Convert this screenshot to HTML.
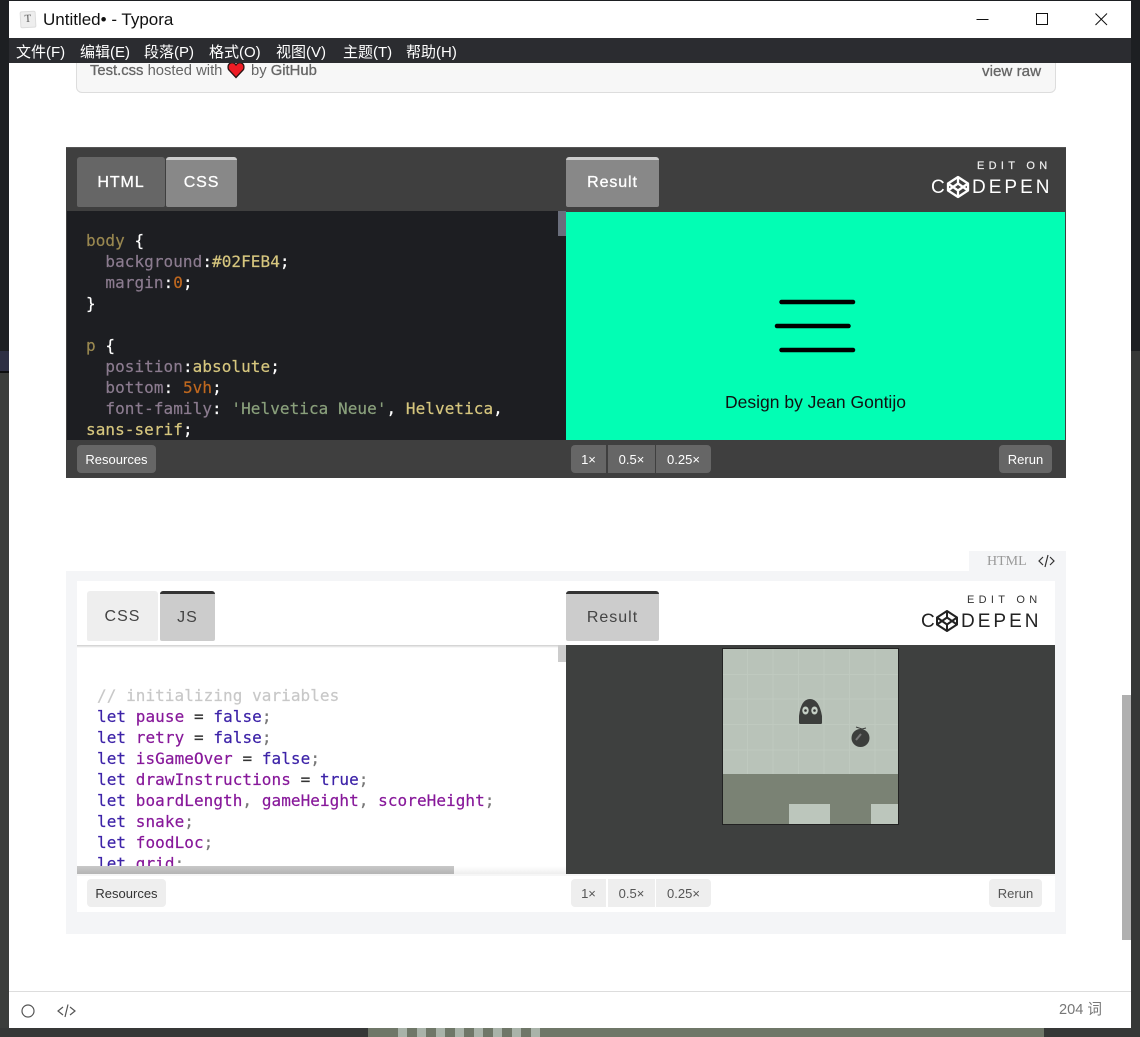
<!DOCTYPE html>
<html><head><meta charset="utf-8"><style>
html,body{margin:0;padding:0;width:1140px;height:1037px;overflow:hidden;background:#1d1f22;font-family:"Liberation Sans","Noto Sans CJK SC",sans-serif}
div,span.a,svg{position:absolute}
.t{white-space:pre;line-height:1}
.tab{display:flex;align-items:center;justify-content:center;box-sizing:border-box;font-size:16px;letter-spacing:1px;border-radius:3px 3px 2px 2px}
.d{-webkit-text-stroke:.3px #fff;letter-spacing:.9px}
.btn{display:flex;align-items:center;justify-content:center;box-sizing:border-box;font-size:13px;border-radius:4px;height:28px;top:0}
.code{font-family:"DejaVu Sans Mono","Liberation Mono",monospace;font-size:16px;letter-spacing:.06px;line-height:21px;white-space:pre;overflow:hidden;-webkit-text-stroke:.2px}
.m{font-size:15px;color:#fff;top:44px;line-height:18px;white-space:pre}
.dk .s{color:#9a8850}.dk .b{color:#fff}.dk .p{color:#8b7b8f}.dk .v{color:#d6c67e}.dk .n{color:#c0681f}.dk .q{color:#8aa07c}
.lt{color:#444}.lt .c{color:#c8c8c8}.lt .k{color:#3d23a8}.lt .i{color:#87189a}.lt .o{color:#333}.lt .u{color:#777}
</style></head><body>
<div style="left:0;top:351px;width:9px;height:20px;background:#2e3044"></div>
<div style="left:0;top:371px;width:9px;height:2px;background:#0e0f10"></div>
<div style="left:0;top:373px;width:9px;height:664px;background:#3b3d3b"></div>
<div style="left:1131px;top:0;width:9px;height:351px;background:#1d1f22"></div>
<div style="left:1131px;top:351px;width:9px;height:686px;background:#363837"></div>
<div style="left:0;top:1028px;width:1140px;height:9px;background:#363837"></div>
<div style="left:368px;top:1028px;width:676px;height:9px;background:#6f7768"></div>
<div style="left:398px;top:1028px;width:150px;height:9px;background:repeating-linear-gradient(90deg,#a9b3a9 0 9px,#6f7768 9px 19px)"></div>

<div style="left:9px;top:1px;width:1122px;height:1027px;background:#fff"></div>

<!-- gist -->
<div style="left:76px;top:55px;width:978px;height:36px;background:#f7f7f7;border:1px solid #ddd;border-radius:6px"></div>
<div class="t" style="left:90px;top:64px;font-size:14.800px;color:#666"><span style="-webkit-text-stroke:.3px #666">Test.css</span> hosted with</div>
<svg style="left:227px;top:60px" width="18" height="19" viewBox="0 0 18 19"><path d="M9 17.500 1.500 9.500Q0 5 3.500 3Q7 2 9 5Q11 2 14.500 3Q18 5 16.500 9.500Z" fill="#ee1c25" stroke="#2b1414" stroke-width="1.300"/></svg>
<div class="t" style="left:251px;top:64px;font-size:14.800px;color:#666">by <span style="-webkit-text-stroke:.3px #666">GitHub</span></div>
<div class="t" style="left:982px;top:64px;font-size:15.200px;color:#666;-webkit-text-stroke:.3px #666">view raw</div>

<!-- title bar -->
<div style="left:9px;top:38px;width:1122px;height:25px;background:#2b2c30"></div>
<div style="left:20px;top:11px;width:16px;height:17px;background:#eee;border:1px solid #ddd;border-radius:2px;box-sizing:border-box;transform:rotate(-3deg);color:#555;font:11px/15px 'Liberation Serif',serif;text-align:center">T</div>
<div class="t" style="left:43px;top:11px;font-size:17px;color:#111">Untitled• - Typora</div>
<svg style="left:970px;top:8px" width="150" height="22" viewBox="0 0 150 22" fill="none" stroke="#111" stroke-width="1"><path d="M6.500 11.500H18.500"/><rect x="66.500" y="5.500" width="11" height="11"/><path d="M125.500 5.500 137 17M137 5.500 125.500 17"/></svg>
<div class="m" style="left:16px">文件(F)</div>
<div class="m" style="left:80px">编辑(E)</div>
<div class="m" style="left:144px">段落(P)</div>
<div class="m" style="left:209px">格式(O)</div>
<div class="m" style="left:276px">视图(V)</div>
<div class="m" style="left:343px">主题(T)</div>
<div class="m" style="left:406px">帮助(H)</div>

<!-- pen 1 -->
<div style="left:66px;top:147px;width:1000px;height:331px;background:#3f3f3f;border-top:1px solid #555;box-sizing:border-box"></div>
<div class="tab d" style="left:77px;top:157px;width:88px;height:50px;background:#666;color:#fff;padding-top:1px">HTML</div>
<div class="tab d" style="left:166px;top:157px;width:71px;height:50px;background:#888;color:#fff;border-top:3px solid #ccc;padding-bottom:1px">CSS</div>
<div class="tab d" style="left:566px;top:157px;width:93px;height:50px;background:#888;color:#fff;border-top:3px solid #ccc;padding-bottom:1px">Result</div>
<div class="t" style="left:977px;top:161px;font-size:11px;letter-spacing:4.300px;color:#eee;-webkit-text-stroke:.2px #eee">EDIT ON</div>
<div class="t" style="left:931px;top:178px;font-size:19px;letter-spacing:1.600px;color:#fff">C</div>
<svg style="left:946px;top:175px" width="24" height="24" viewBox="0 0 24 24" fill="none" stroke="#fff" stroke-width="2.300" stroke-linejoin="round"><path d="M12 2 22 8.500V15.500L12 22 2 15.500V8.500ZM12 2V8M12 16V22M2 8.500 12 15.500 22 8.500M2 15.500 12 8.500 22 15.500"/></svg>
<div class="t" style="left:972px;top:178px;font-size:19px;letter-spacing:3px;color:#fff">DEPEN</div>
<div style="left:67px;top:211px;width:499px;height:229px;background:#1d1e22"></div>
<div class="code dk" style="left:86px;top:230px;width:470px;height:210px;color:#fff"><span class="s">body</span> <span class="b">{</span>
  <span class="p">background</span><span class="b">:</span><span class="v">#02FEB4</span><span class="b">;</span>
  <span class="p">margin</span><span class="b">:</span><span class="n">0</span><span class="b">;</span>
<span class="b">}</span>

<span class="s">p</span> <span class="b">{</span>
  <span class="p">position</span><span class="b">:</span><span class="v">absolute</span><span class="b">;</span>
  <span class="p">bottom</span><span class="b">:</span> <span class="n">5vh</span><span class="b">;</span>
  <span class="p">font-family</span><span class="b">:</span> <span class="q">'Helvetica Neue'</span><span class="b">,</span> <span class="v">Helvetica</span><span class="b">,</span>
<span class="v">sans-serif</span><span class="b">;</span></div>
<div style="left:558px;top:211px;width:8px;height:25px;background:#6a6e7c"></div>
<div style="left:566px;top:212px;width:499px;height:228px;background:#02FEB4"></div>
<svg style="left:770px;top:295px" width="90" height="60" viewBox="0 0 90 60" stroke="#000" stroke-width="4.500" stroke-linecap="round" fill="none"><path d="M11.500 7H83"/><path d="M7 31H78.500"/><path d="M11.500 55H83"/></svg>
<div class="t" style="left:725px;top:394px;font-size:17.500px;color:#111">Design by Jean Gontijo</div>
<div class="btn" style="left:77px;top:445px;width:79px;background:#666;color:#fff">Resources</div>
<div class="btn" style="left:571px;top:445px;width:35px;background:#666;color:#fff;border-radius:4px 0 0 4px">1×</div>
<div class="btn" style="left:608px;top:445px;width:47px;background:#666;color:#fff;border-radius:0">0.5×</div>
<div class="btn" style="left:656px;top:445px;width:55px;background:#666;color:#fff;border-radius:0 4px 4px 0">0.25×</div>
<div class="btn" style="left:999px;top:445px;width:53px;background:#666;color:#fff">Rerun</div>

<!-- pen 2 -->
<div style="left:969px;top:551px;width:97px;height:20px;background:#f4f5f7"></div>
<div class="t" style="left:987px;top:554px;font:14px 'Liberation Serif',serif;color:#999">HTML</div>
<svg style="left:1037px;top:553px" width="19" height="16" viewBox="0 0 19 16" fill="none" stroke="#333" stroke-width="1.200"><path d="M6 4 2 8l4 4M13 4l4 4-4 4M11 2 8 14"/></svg>
<div style="left:66px;top:571px;width:1000px;height:363px;background:#f4f5f7"></div>
<div style="left:77px;top:581px;width:978px;height:331px;background:#fff"></div>
<div style="left:77px;top:645px;width:489px;height:3px;background:linear-gradient(#ccc,#fff)"></div>
<div class="tab" style="left:87px;top:591px;width:71px;height:50px;background:#eee;color:#444;padding-top:1px">CSS</div>
<div class="tab" style="left:160px;top:591px;width:55px;height:50px;background:#ccc;color:#444;border-top:3px solid #333">JS</div>
<div class="tab" style="left:566px;top:591px;width:93px;height:50px;background:#ccc;color:#444;border-top:3px solid #333">Result</div>
<div class="t" style="left:967px;top:595px;font-size:11px;letter-spacing:4.300px;color:#333">EDIT ON</div>
<div class="t" style="left:921px;top:612px;font-size:19px;letter-spacing:1.600px;color:#222">C</div>
<svg style="left:935px;top:609px" width="24" height="24" viewBox="0 0 24 24" fill="none" stroke="#222" stroke-width="2" stroke-linejoin="round"><path d="M12 2 22 8.500V15.500L12 22 2 15.500V8.500ZM12 2V8M12 16V22M2 8.500 12 15.500 22 8.500M2 15.500 12 8.500 22 15.500"/></svg>
<div class="t" style="left:961px;top:612px;font-size:19px;letter-spacing:3px;color:#222">DEPEN</div>
<div class="code lt" style="left:97px;top:685px;width:450px;height:181px"><span class="c">// initializing variables</span>
<span class="k">let</span> <span class="i">pause</span> <span class="o">=</span> <span class="k">false</span><span class="u">;</span>
<span class="k">let</span> <span class="i">retry</span> <span class="o">=</span> <span class="k">false</span><span class="u">;</span>
<span class="k">let</span> <span class="i">isGameOver</span> <span class="o">=</span> <span class="k">false</span><span class="u">;</span>
<span class="k">let</span> <span class="i">drawInstructions</span> <span class="o">=</span> <span class="k">true</span><span class="u">;</span>
<span class="k">let</span> <span class="i">boardLength</span><span class="u">,</span> <span class="i">gameHeight</span><span class="u">,</span> <span class="i">scoreHeight</span><span class="u">;</span>
<span class="k">let</span> <span class="i">snake</span><span class="u">;</span>
<span class="k">let</span> <span class="i">foodLoc</span><span class="u">;</span>
<span class="k">let</span> <span class="i">grid</span><span class="u">;</span></div>
<div style="left:558px;top:645px;width:8px;height:17px;background:#ccc"></div>
<div style="left:77px;top:866px;width:489px;height:8px;background:linear-gradient(#fff,#eee)"></div>
<div style="left:77px;top:866px;width:377px;height:8px;background:linear-gradient(#c8c8c8,#b4b4b4)"></div>
<div style="left:566px;top:645px;width:489px;height:229px;background:#3e403f"></div>
<svg style="left:722px;top:648px" width="177" height="178" viewBox="0 0 177 178" shape-rendering="crispEdges">
<rect x=".5" y=".5" width="176" height="176" fill="#b9c3b9" stroke="#222"/>
<path d="M25.500 1V126M51 1V126M76.500 1V126M102 1V126M127.500 1V126M153 1V126M1 26.500H176M1 51H176M1 76.500H176M1 102H176" stroke="#bfc9bf" fill="none"/>
<rect x="1" y="126" width="175" height="50" fill="#7a8274"/>
<rect x="67" y="156" width="41" height="20" fill="#bcc6bc"/>
<rect x="149" y="156" width="27" height="20" fill="#bcc6bc"/>
</svg>
<svg style="left:722px;top:648px" width="177" height="178" viewBox="0 0 177 178">
<path d="M77 75V68Q79 51 88 51Q97 51 100 68V75Q100 76 98 76H79Q77 76 77 75Z" fill="#3c3e3c"/>
<ellipse cx="83.500" cy="62.500" rx="3.200" ry="4" fill="#c4cec4"/><ellipse cx="92.500" cy="62.500" rx="3.200" ry="4" fill="#c4cec4"/>
<circle cx="83.500" cy="62.500" r="1.300" fill="#333"/><circle cx="92.500" cy="62.500" r="1.300" fill="#333"/>
<circle cx="138.500" cy="90" r="9" fill="#3c3e3c"/>
<path d="M134 92l5-6" stroke="#777" stroke-width="2"/>
<path d="M134 79l6 2 4-1" stroke="#3c3e3c" stroke-width="1" fill="none"/>
</svg>
<div style="left:77px;top:874px;width:978px;height:2px;background:#f6f6f6"></div>
<div class="btn" style="left:87px;top:879px;width:79px;background:#eee;color:#333">Resources</div>
<div class="btn" style="left:571px;top:879px;width:35px;background:#eee;color:#555;border-radius:4px 0 0 4px">1×</div>
<div class="btn" style="left:608px;top:879px;width:47px;background:#eee;color:#555;border-radius:0">0.5×</div>
<div class="btn" style="left:656px;top:879px;width:55px;background:#eee;color:#555;border-radius:0 4px 4px 0">0.25×</div>
<div class="btn" style="left:989px;top:879px;width:53px;background:#eee;color:#555">Rerun</div>

<!-- scrollbar + status -->
<div style="left:1122px;top:695px;width:9px;height:245px;background:#b0b0b0"></div>
<div style="left:9px;top:991px;width:1122px;height:1px;background:#ddd"></div>
<svg style="left:20px;top:1003px" width="60" height="16" viewBox="0 0 60 16" fill="none" stroke="#555" stroke-width="1.200"><circle cx="8" cy="8" r="6"/><path d="M43 4 38 8l5 4M50 4l5 4-5 4M48 1.500 45 14"/></svg>
<div class="t" style="left:1059px;top:1003px;font-size:14.600px;color:#777">204 词</div>
</body></html>
